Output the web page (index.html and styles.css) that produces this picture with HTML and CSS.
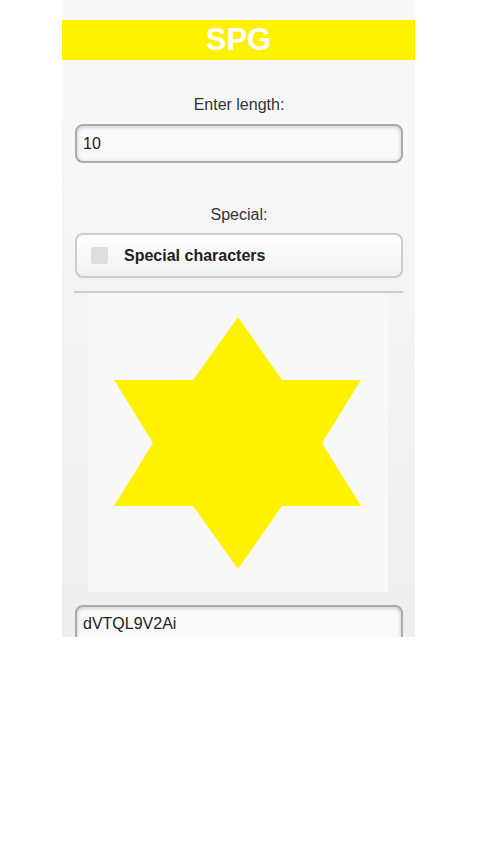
FILE: index.html
```html
<!DOCTYPE html>
<html lang="en">
<head>
    <meta charset="UTF-8">
    <title>SPG</title>
    <link rel="stylesheet" href="styles.css">
</head>
<body>
<div class="page">
    <!-- 标题 -->
    <div class="header">
        <h1>SPG</h1>
    </div>
    <div class="content">
        <label class="title" for="len">Enter length:</label>
        <input id="len" class="text" type="text" value="10">

        <div class="title special">Special:</div>
        <label class="check">
            <span class="box"></span>
            <span class="check-text">Special characters</span>
        </label>

        <div class="line"></div>

        <!-- 星星 -->
        <div class="canvas">
            <svg width="300" height="298" viewBox="0 0 300 298">
                <polygon fill="#fff200" points="150,23 194,86 273,86 234,149 273,212 194,212 150,275 105,212 26,212 65,149 26,86 105,86"/>
            </svg>
        </div>

        <textarea class="text result">dVTQL9V2Ai</textarea>
    </div>
</div>
</body>
</html>
```

FILE: styles.css
```css
body {
    margin: 0;
    padding: 0;
    background-color: #FFF;
    font-family: "Liberation Sans", Arial, sans-serif;
}
.page {
    width: 353px;
    height: 637px;
    margin-left: 62px;
    padding-top: 20px;
    box-sizing: border-box;
    overflow: hidden;
    background: linear-gradient(#F9F9F9, #EEEEEE);
}
.header {
    height: 40px;
    background-color: #FFF200;
}
.header h1 {
    margin: 0;
    font-size: 31px;
    line-height: 40px;
    text-align: center;
    color: #FFF;
    font-weight: bold;
}
.content {
    padding: 0 12px 0 13px;
}
.title {
    display: block;
    margin-top: 35px;
    height: 20px;
    font-size: 16px;
    line-height: 20px;
    text-align: center;
    color: #333;
}
.special {
    margin-top: 42px;
}
.text {
    display: block;
    width: 100%;
    height: 39px;
    margin-top: 9px;
    padding: 0 6px;
    box-sizing: border-box;
    border: 2px solid #AAA;
    border-radius: 8px;
    background-color: #F9F9F9;
    box-shadow: inset 0 1px 4px rgba(0, 0, 0, 0.2);
    font-family: "Liberation Sans", Arial, sans-serif;
    font-size: 16px;
    color: #222;
    outline: none;
}
.check {
    display: flex;
    align-items: center;
    height: 45px;
    margin-top: 8px;
    padding-left: 14px;
    box-sizing: border-box;
    border: 2px solid #CCC;
    border-radius: 8px;
    background: linear-gradient(#FFF, #F1F1F1);
}
.box {
    width: 17px;
    height: 17px;
    border-radius: 3px;
    background-color: #DDD;
}
.check-text {
    margin-left: 16px;
    font-size: 16px;
    font-weight: bold;
    color: #222;
}
.line {
    height: 2px;
    margin-top: 13px;
    margin-left: -1px;
    background-color: #CCC;
}
.canvas {
    width: 300px;
    height: 298px;
    margin: 1px 0 0 13px;
    background-color: #F8F8F8;
}
.canvas svg {
    display: block;
}
.result {
    height: 60px;
    margin-top: 13px;
    padding-top: 8px;
    resize: vertical;
}
```
